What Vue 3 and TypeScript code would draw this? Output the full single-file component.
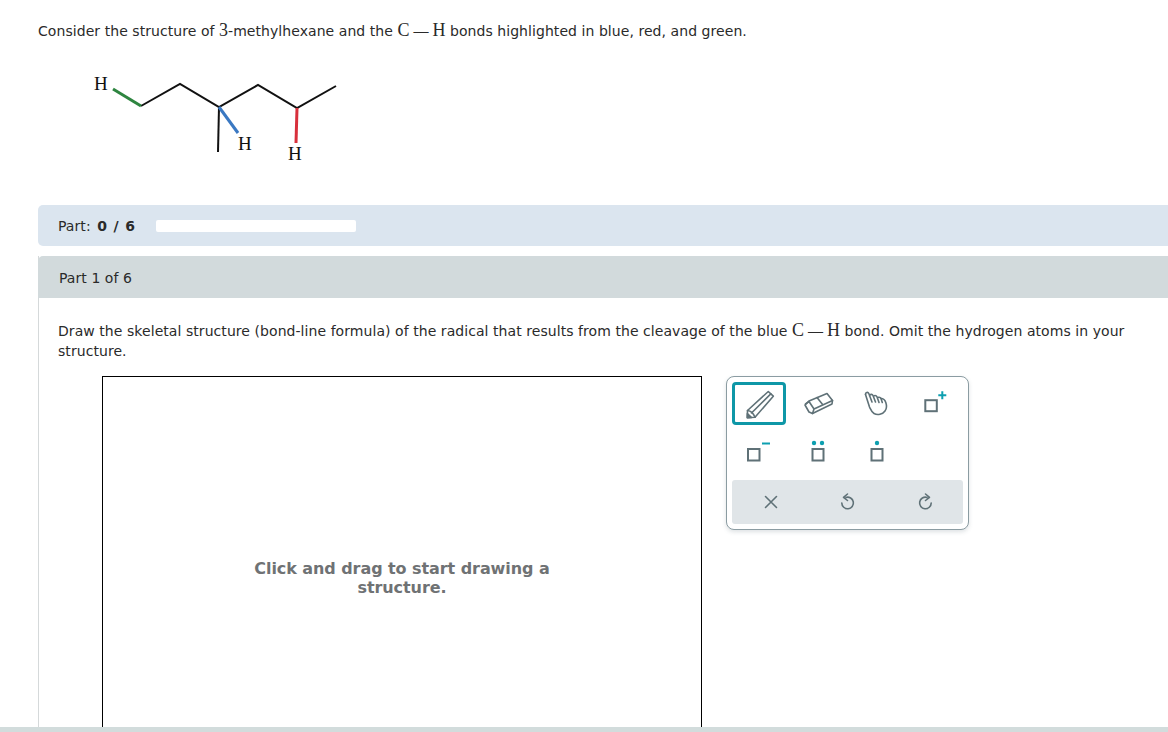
<template>
  <div class="page">
    <p class="intro">
      Consider the structure of <span class="num">3</span>-methylhexane and the
      <span class="chem">C<span class="dash">—</span>H</span> bonds highlighted in blue, red, and green.
    </p>

    <svg class="molecule" width="300" height="110" viewBox="80 70 300 110">
      <polyline points="141,106 180,84 219,107 258,85 297,108 336,86" class="bond" />
      <line x1="219" y1="107" x2="218" y2="152" class="bond" />
      <line x1="113" y1="89" x2="141" y2="106" class="bond green" />
      <line x1="219" y1="107" x2="238" y2="133" class="bond blue" />
      <line x1="297" y1="108" x2="296" y2="143" class="bond red" />
      <text x="101" y="90" class="atom">H</text>
      <text x="245" y="150" class="atom">H</text>
      <text x="295" y="160" class="atom">H</text>
    </svg>

    <div class="progress-bar">
      <span>Part: <b class="count">0 / 6</b></span>
      <div class="progress-track"></div>
    </div>

    <section class="part">
      <header class="part-head">Part 1 of 6</header>
      <div class="part-body">
        <p class="prompt">
          Draw the skeletal structure (bond-line formula) of the radical that results from the cleavage of the blue
          <span class="chem">C<span class="dash">—</span>H</span> bond. Omit the hydrogen atoms in your structure.
        </p>
        <div class="workspace">
          <div class="canvas">
            <div class="hint">Click and drag to start drawing a structure.</div>
          </div>
          <div class="toolbar">
            <div class="tools">
              <button class="tool active" aria-label="Draw">
                <svg width="30" height="30" viewBox="0 0 30 30" class="ico">
                  <path d="M3.300 28.800 3.500 21.500 24.300 2.500 29.300 7.200 11 28.200Z" />
                  <path d="M26.800 4.900 7.500 24M3.500 21.500Q8.500 22 11 28.200" />
                  <path d="M3.300 28.800 3.400 24.500 7.500 28.500Z" class="solid" />
                </svg>
              </button>
              <button class="tool" aria-label="Erase">
                <svg width="30" height="24" viewBox="0 0 30 24" class="ico">
                  <path d="M1 13 5 9 23 1.500 28.500 8.500 28 12 8.500 21.500 5 20Z" />
                  <path d="M1.500 12 5 9.500 10 17 8.500 21.500M10 17 28.500 8.500M13 5.500 19 13" />
                </svg>
              </button>
              <button class="tool" aria-label="Move">
                <svg width="24" height="24" viewBox="0 0 24 24" class="ico">
                  <path d="M.5 2.500C.2 .3 3 -.3 3.800 1.500L7 10M4.600 3.800C5 2 7.300 1.800 8 3.500L10.500 10M8.400 4.600C9 3 11.200 3.200 12 4.800L14 10.500M12.300 6C13 4.800 15.200 5 16 6.500L17.300 10.500" />
                  <path d="M16 6.500C18.500 6.500 20 8 20.800 10.500 22 14 21.500 17 20 19 17.500 22.500 12.500 23.500 9 21.500 6.500 20 5.500 17 4.500 15L.5 2.500" />
                </svg>
              </button>
              <button class="tool" aria-label="Add positive charge">
                <svg width="26" height="24" viewBox="0 0 26 24" class="ico box">
                  <rect x="3.300" y="8.200" width="11.500" height="11" />
                  <path d="M16.300 3.200H24.300M20.300 -.8V7.200" class="teal" />
                </svg>
              </button>
              <button class="tool" aria-label="Add negative charge">
                <svg width="30" height="24" viewBox="0 0 30 24" class="ico box">
                  <rect x="2" y="7" width="11.500" height="11.500" />
                  <path d="M16 1.500H24" class="teal" />
                </svg>
              </button>
              <button class="tool" aria-label="Add lone pair">
                <svg width="26" height="24" viewBox="0 0 26 24" class="ico box">
                  <rect x="6.500" y="7" width="11" height="11.500" />
                  <circle cx="8" cy="1" r="2.200" class="dot" />
                  <circle cx="16" cy="1" r="2.200" class="dot" />
                </svg>
              </button>
              <button class="tool" aria-label="Add radical">
                <svg width="26" height="24" viewBox="0 0 26 24" class="ico box">
                  <rect x="7.500" y="7" width="11" height="11.500" />
                  <circle cx="13" cy="1" r="2.200" class="dot" />
                </svg>
              </button>
            </div>
            <div class="actions">
              <button class="action" aria-label="Clear">
                <svg width="14" height="14" viewBox="0 0 14 14" class="ico">
                  <path d="M1.500 1.500 12.500 12.500M12.500 1.500 1.500 12.500" />
                </svg>
              </button>
              <button class="action" aria-label="Undo">
                <svg width="16" height="18" viewBox="0 0 16 18" class="ico">
                  <path d="M6 4.400A5.800 5.800 0 1 1 1.800 10M7.500 1 3.500 4.300 7.500 7.500" />
                </svg>
              </button>
              <button class="action" aria-label="Redo">
                <svg width="16" height="18" viewBox="0 0 16 18" class="ico">
                  <path d="M10 4.400A5.800 5.800 0 1 0 14.200 10M8.500 1 12.500 4.300 8.500 7.500" />
                </svg>
              </button>
            </div>
          </div>
        </div>
      </div>
    </section>

    <div class="bottom-strip"></div>
  </div>
</template>

<script setup lang="ts">
</script>

<style>
html,
body {
  margin: 0;
  overflow: hidden;
  background: #fff;
}
</style>

<style scoped>
.page {
  position: relative;
  height: 732px;
  overflow: hidden;
  padding: 21px 0 0 38px;
  box-sizing: border-box;
  font-family: "DejaVu Sans", Verdana, sans-serif;
  font-size: 14px;
  letter-spacing: 0.06px;
  color: #2a2a2a;
}

.intro {
  margin: 0;
  line-height: 18px;
}

.num,
.chem {
  font-family: "Liberation Serif", serif;
  font-size: 18px;
  letter-spacing: 0;
}

.dash {
  margin: 0 4px;
  font-size: 15px;
  font-weight: 700;
}

.molecule {
  display: block;
  margin: 30px 0 0 42px;
}

.bond {
  fill: none;
  stroke: #111;
  stroke-width: 2;
}

.green {
  stroke: #2e8540;
  stroke-width: 3;
}

.blue {
  stroke: #3a78c2;
  stroke-width: 3;
}

.red {
  stroke: #d8303c;
  stroke-width: 3;
}

.atom {
  font-family: "Liberation Serif", serif;
  font-size: 19px;
  text-anchor: middle;
  fill: #111;
}

.progress-bar {
  display: flex;
  align-items: center;
  gap: 20px;
  height: 41px;
  margin-top: 25px;
  padding-left: 20px;
  background: #dbe5ef;
  border-radius: 5px 0 0 5px;
}

.count {
  margin-left: 2px;
  font-weight: 700;
  letter-spacing: 0.9px;
}

.progress-track {
  width: 200px;
  height: 12px;
  background: #fff;
  border-radius: 2px;
}

.part {
  margin-top: 10px;
  border-left: 1px solid #d5d9da;
}

.part-head {
  height: 42px;
  margin-left: -1px;
  padding-left: 21px;
  line-height: 44px;
  background: #d2dadc;
  border-radius: 5px 0 0 0;
}

.part-body {
  padding: 22px 40px 0 19px;
}

.prompt {
  margin: 0;
  line-height: 20px;
}

.workspace {
  display: flex;
  align-items: flex-start;
  gap: 24px;
  margin: 15px 0 0 44px;
}

.canvas {
  flex: none;
  display: flex;
  align-items: center;
  justify-content: center;
  box-sizing: border-box;
  width: 600px;
  height: 400px;
  border: 1px solid #000;
}

.hint {
  width: 320px;
  margin-top: 3px;
  font-size: 16px;
  font-weight: 700;
  line-height: 19px;
  letter-spacing: -0.07px;
  text-align: center;
  color: #6f7274;
}

.toolbar {
  flex: none;
  box-sizing: border-box;
  width: 243px;
  height: 154px;
  padding: 5px;
  background: #fff;
  border: 1px solid #8b9ca2;
  border-radius: 8px;
  box-shadow: 0 2px 4px rgba(90, 110, 120, 0.2);
}

.tools {
  display: grid;
  grid-template-columns: repeat(4, 58px);
  grid-auto-rows: 50px;
  height: 98px;
}

button {
  display: flex;
  align-items: center;
  justify-content: center;
  padding: 0;
  background: none;
  border: 0;
}

.tool {
  width: 54px;
  height: 43px;
  margin: 0 auto;
  border: 3px solid transparent;
  border-radius: 4px;
  box-sizing: border-box;
}

.tool.active {
  margin-left: 0;
  border-color: #0e97a7;
}

.ico {
  overflow: visible;
  flex: none;
  fill: none;
  stroke: #5f7177;
  stroke-width: 1.600;
  stroke-linejoin: round;
  stroke-linecap: round;
}

.ico.box {
  stroke-width: 2;
  stroke-linejoin: miter;
}

.ico .solid {
  fill: #5f7177;
}

.ico .teal {
  stroke: #0d9fb0;
  stroke-width: 2;
  stroke-linecap: butt;
}

.ico .dot {
  fill: #0d9fb0;
  stroke: none;
}

.actions {
  display: grid;
  grid-template-columns: repeat(3, 1fr);
  height: 44px;
  background: #e0e5e8;
  border-radius: 3px;
}

.action {
  height: 44px;
  width: 100%;
}

.bottom-strip {
  position: absolute;
  left: 0;
  right: 0;
  bottom: 0;
  height: 5px;
  background: #d2dcdc;
}
</style>
